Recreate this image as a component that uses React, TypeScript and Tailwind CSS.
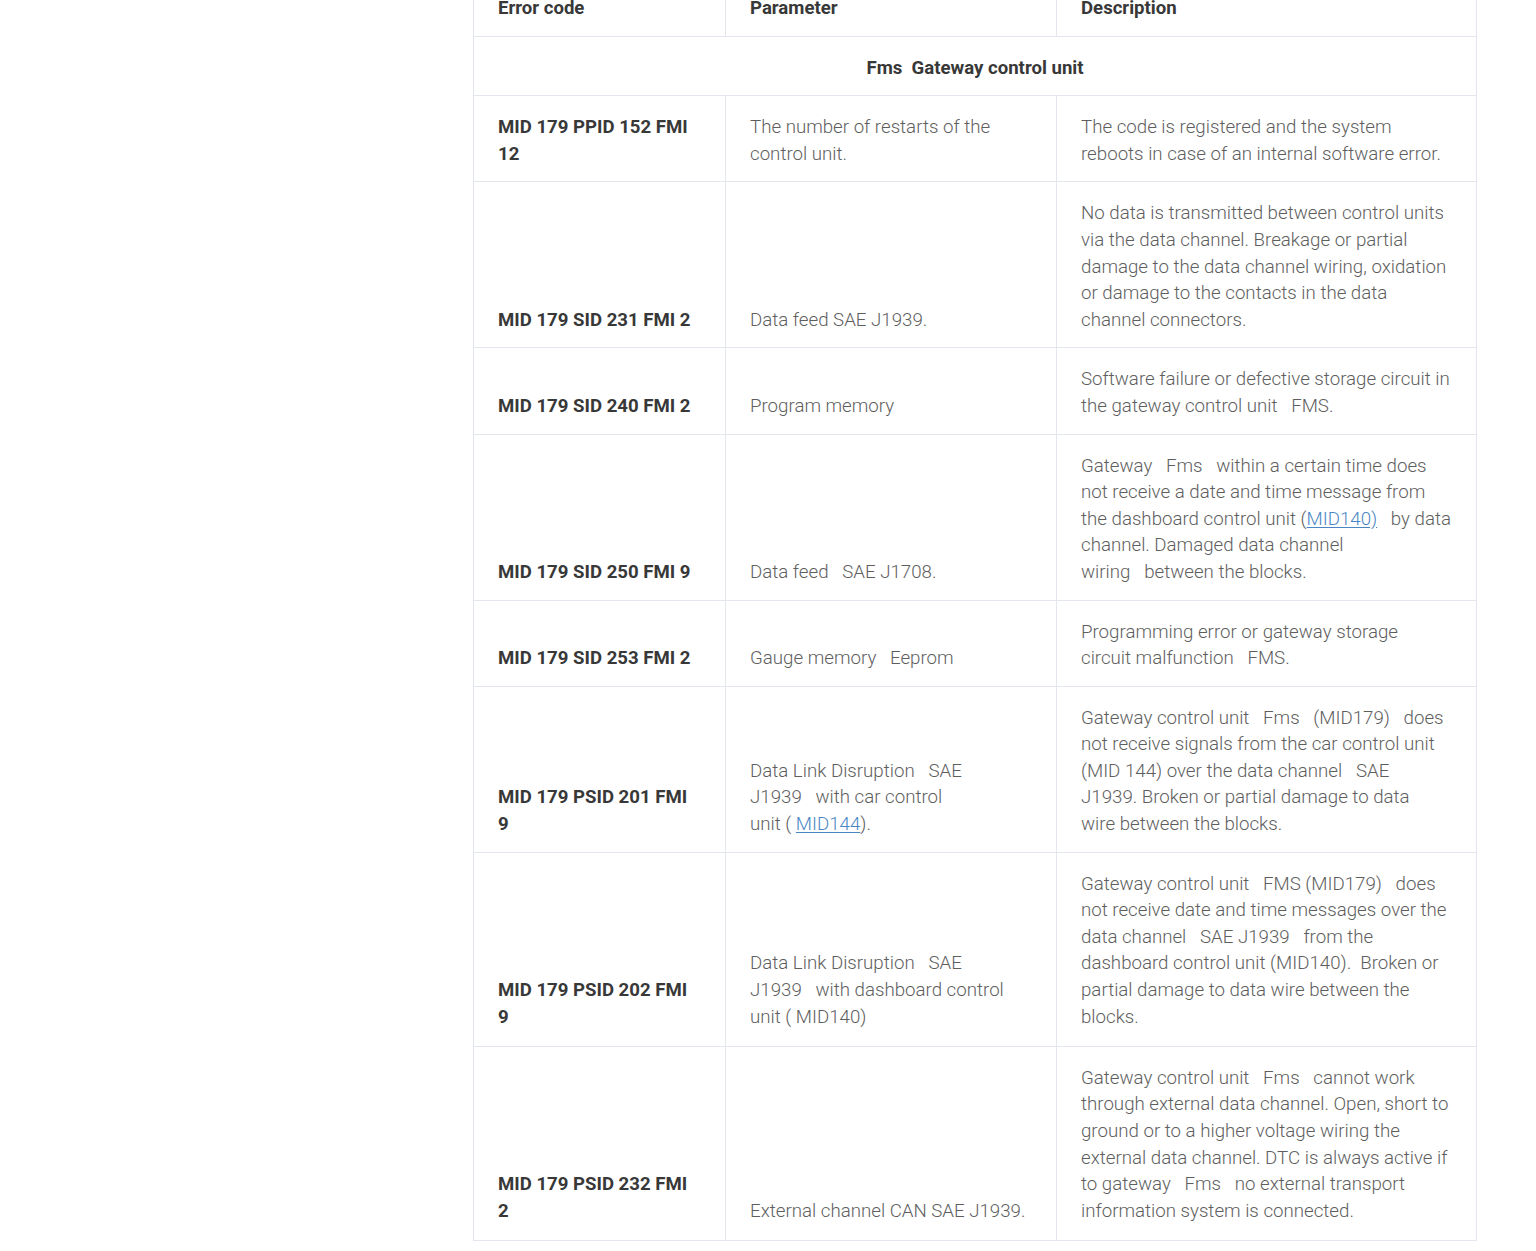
import React from "react";

const S = " \u00a0 ";
const N = "\u00a0\u00a0\u00a0";

type Row = { code: React.ReactNode; param: React.ReactNode; desc: React.ReactNode; tall?: boolean };

const Link = ({ children }: { children: React.ReactNode }) => (
  <a href="#" className="text-[#4a86c5] underline underline-offset-2">
    {children}
  </a>
);

const rows: Row[] = [
  {
    code: "MID 179 PPID 152 FMI 12",
    param: "The number of restarts of the control unit.",
    desc: "The code is registered and the system reboots in case of an internal software error.",
  },
  {
    code: "MID 179 SID 231 FMI 2",
    param: "Data feed SAE J1939.",
    desc: "No data is transmitted between control units via the data channel. Breakage or partial damage to the data channel wiring, oxidation or damage to the contacts in the data channel connectors.",
  },
  {
    code: "MID 179 SID 240 FMI 2",
    param: "Program memory",
    desc: <>Software failure or defective storage circuit in the gateway control unit{S}FMS.</>,
  },
  {
    code: "MID 179 SID 250 FMI 9",
    param: <>Data feed{S}SAE J1708.</>,
    desc: (
      <>
        Gateway{S}Fms{S}within a certain time does not receive a date and time message from the dashboard control unit (<Link>MID140)</Link>{S}by data channel. Damaged data channel wiring{N}between the blocks.
      </>
    ),
  },
  {
    code: "MID 179 SID 253 FMI 2",
    param: <>Gauge memory{S}Eeprom</>,
    desc: <>Programming error or gateway storage circuit malfunction{S}FMS.</>,
  },
  {
    code: "MID 179 PSID 201 FMI 9",
    param: (
      <>
        Data Link Disruption{S}SAE J1939{N}with car control unit{"\u00a0(\u00a0"}<Link>MID144</Link>).
      </>
    ),
    desc: (
      <>
        Gateway control unit{S}Fms{S}(MID179){S}does not receive signals from the car control unit (MID 144) over the data channel{S}SAE J1939.{"\u00a0"}Broken or partial damage to data wire{"\u00a0"}between the blocks.
      </>
    ),
  },
  {
    code: "MID 179 PSID 202 FMI 9",
    param: <>Data Link Disruption{S}SAE J1939{N}with dashboard control unit{"\u00a0(\u00a0"}MID140)</>,
    desc: (
      <>
        Gateway control unit{S}FMS (MID179){S}does not receive date and time messages over the data channel{S}SAE J1939{S}from the dashboard control unit (MID140).{"\u00a0 "}Broken or partial damage to data wire between the blocks.
      </>
    ),
    tall: true,
  },
  {
    code: "MID 179 PSID 232 FMI 2",
    param: "External channel CAN SAE J1939.",
    desc: (
      <>
        Gateway control unit{S}Fms{S}cannot work through external data channel. Open, short to ground or to a higher voltage wiring the external data channel. DTC is always active if to gateway{S}Fms{S}no external transport information system is connected.
      </>
    ),
    tall: true,
  },
];

const base = "border border-[#e3e6ed] px-6 pt-[18px] align-bottom";
const bold = "font-bold text-[#383838] text-[18.6px]";
const light = "font-light text-[#5e5e5e] text-[18.7px]";

export default function App() {
  return (
    <div
      className="min-h-[1251px] bg-white overflow-hidden"
      style={{ fontFamily: "Roboto, 'Liberation Sans', sans-serif" }}
    >
      <div className="ml-[473px] w-[1003px] -mt-[22px]">
        <table className="w-full border-collapse table-fixed leading-[26.6px]">
          <colgroup>
            <col className="w-[252px]" />
            <col className="w-[331px]" />
            <col className="w-[420px]" />
          </colgroup>
          <thead>
            <tr>
              {["Error code", "Parameter", "Description"].map((h) => (
                <th
                  key={h}
                  className={`border border-[#e3e6ed] px-6 pt-[16px] pb-[14px] text-left align-bottom ${bold}`}
                >
                  {h}
                </th>
              ))}
            </tr>
          </thead>
          <tbody>
            <tr>
              <td colSpan={3} className={`border border-[#e3e6ed] px-6 pt-[18px] pb-[14px] text-center ${bold}`}>
                Fms{"\u00a0 "}Gateway control unit
              </td>
            </tr>
            {rows.map((r, i) => {
              const cell = `${base} ${r.tall ? "pb-[15.5px]" : "pb-[14px]"}`;
              return (
                <tr key={i}>
                  <td className={`${cell} ${bold}`}>{r.code}</td>
                  <td className={`${cell} ${light}`}>{r.param}</td>
                  <td className={`${cell} ${light}`}>{r.desc}</td>
                </tr>
              );
            })}
          </tbody>
        </table>
      </div>
    </div>
  );
}
